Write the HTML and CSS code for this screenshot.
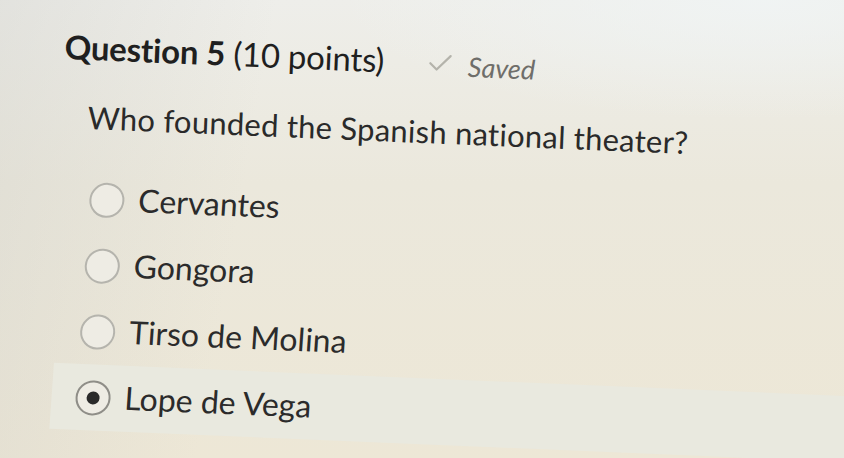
FILE: index.html
```html
<!DOCTYPE html>
<html>
<head>
<meta charset="utf-8">
<link rel="stylesheet" href="styles.css">
</head>
<body>
<div class="screen">
  <div class="quiz">
    <div class="header">
      <h2 class="title"><span class="qnum">Question 5</span> <span class="pts">(10 points)</span></h2>
      <div class="saved">
        <svg class="check" width="24" height="19" viewBox="0 0 24 19"><path d="M2 10 L8.5 16 L22 2" fill="none" stroke="#b4b3ab" stroke-width="2.2" stroke-linecap="round" stroke-linejoin="round"/></svg>
        <span>Saved</span>
      </div>
    </div>
    <p class="question">Who founded the Spanish national theater?</p>
    <ul class="options">
      <li class="option"><span class="radio"></span><span class="label">Cervantes</span></li>
      <li class="option"><span class="radio"></span><span class="label">Gongora</span></li>
      <li class="option"><span class="radio"></span><span class="label">Tirso de Molina</span></li>
      <li class="option selected"><span class="radio"><span class="dot"></span></span><span class="label">Lope de Vega</span></li>
    </ul>
  </div>
</div>
</body>
</html>
```
FILE: styles.css
```css
html, body {
  margin: 0;
  padding: 0;
  width: 844px;
  height: 458px;
  overflow: hidden;
}
body {
  background:
    radial-gradient(ellipse 420px 120px at 760px 0px, rgba(240,244,244,0.9) 0%, rgba(240,244,244,0) 100%),
    linear-gradient(100deg, rgba(205,205,200,0.35) 0%, rgba(230,228,218,0) 30%),
    linear-gradient(180deg, #eeeeea 0%, #ebe8dc 40%, #ede7d6 100%);
  font-family: Lato, "Open Sans", sans-serif;
}
.screen {
  width: 844px;
  height: 458px;
  overflow: hidden;
}
.quiz {
  transform: rotate(2.4deg);
  transform-origin: 66px 40px;
  padding: 26px 0 0 65px;
  width: 900px;
}
.header {
  display: flex;
  align-items: baseline;
  gap: 44px;
}
.title {
  margin: 0;
  font-size: 33px;
  font-weight: 400;
  color: #1f1f1f;
  letter-spacing: -0.2px;
}
.qnum {
  font-weight: 700;
}
.saved {
  display: flex;
  align-items: center;
  gap: 16px;
  font-style: italic;
  font-size: 27px;
  color: #6f6e6a;
}
.check {
  position: relative;
  top: -2px;
}
.question {
  margin: 31px 0 0 26px;
  font-size: 31px;
  color: #2a2a2a;
  letter-spacing: 0.25px;
}
.options {
  list-style: none;
  margin: 30px 0 0 0;
  padding: 0;
  transform: skewX(-1.6deg);
  transform-origin: 0 0;
}
.option {
  display: flex;
  align-items: center;
  gap: 14px;
  height: 66px;
  padding-left: 32px;
  font-size: 32px;
  color: #2b2b2b;
}
.option.selected {
  background: #e9e9df;
  margin-left: 8px;
  padding-left: 24px;
}
.radio {
  width: 31px;
  height: 31px;
  border: 2px solid #b5b4ad;
  border-radius: 50%;
  background: #eeece4;
  display: flex;
  align-items: center;
  justify-content: center;
  flex: none;
}
.selected .radio {
  border-color: #8f8e88;
}
.dot {
  width: 13px;
  height: 13px;
  border-radius: 50%;
  background: #2a2a2a;
}
.label {
  position: relative;
  top: -2px;
}
```
